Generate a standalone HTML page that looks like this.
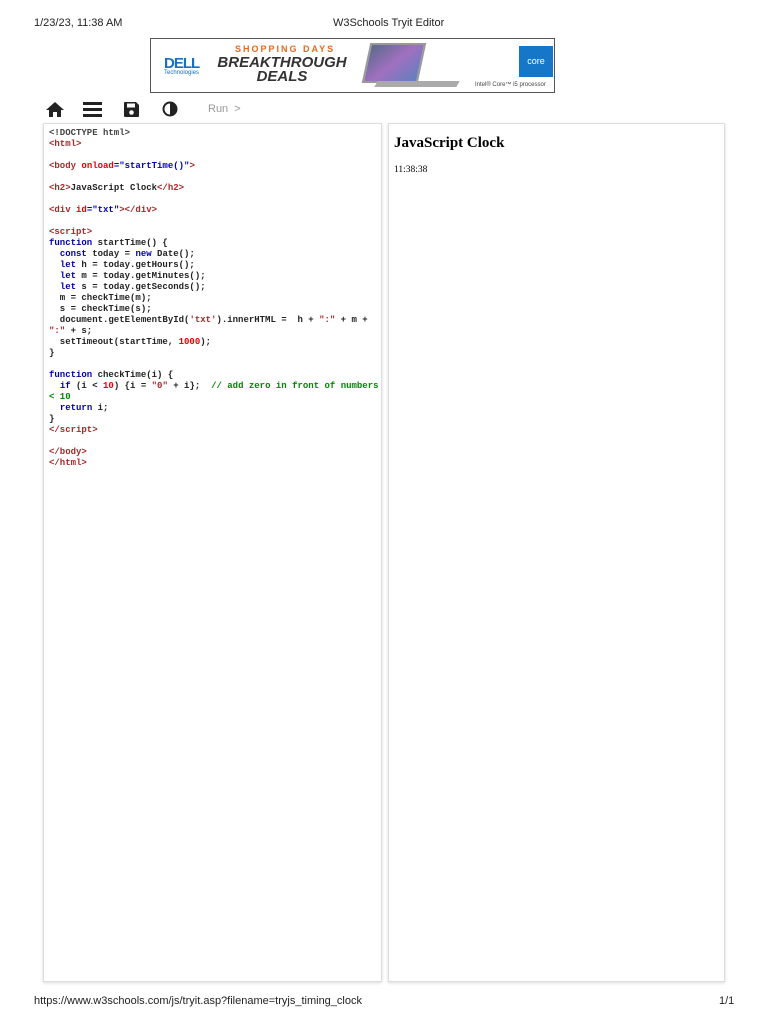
<!DOCTYPE html>
<html><head><style>
body{margin:0;width:768px;height:1024px;background:#fff;position:relative;font-family:"Liberation Sans",sans-serif;overflow:hidden}
.hd{position:absolute;top:17px;font-size:11px;color:#222}
.ad{position:absolute;left:150px;top:38px;width:405px;height:55px;border:1px solid #555;box-sizing:border-box;background:#fff}
.panel{position:absolute;top:123px;height:859px;border:1px solid #ddd;box-shadow:0 1px 3px rgba(0,0,0,.15);box-sizing:border-box}
pre{margin:0;position:absolute;left:5px;top:4px;font-family:"Liberation Mono",monospace;font-size:9px;line-height:11px;font-weight:bold;color:#222}
.t{color:#a52a2a}.a{color:#e00}.v{color:#00b}.k{color:#00a}.n{color:#e00}.c{color:#080}.q{color:#a52a2a}.g{color:#444}
</style></head><body>
<div class="hd" style="left:34px">1/23/23, 11:38 AM</div>
<div class="hd" style="left:333px">W3Schools Tryit Editor</div>
<div class="ad">
 <div style="position:absolute;left:13px;top:16px;color:#1a6fc0;font-weight:bold;font-size:15px;letter-spacing:-1px">DELL</div>
 <div style="position:absolute;left:13px;top:31px;color:#1a6fc0;font-size:6px">Technologies</div>
 <div style="position:absolute;left:84px;top:5px;color:#e86a1f;font-weight:bold;font-size:9px;letter-spacing:2px">SHOPPING DAYS</div>
 <div style="position:absolute;left:66px;top:17px;width:130px;text-align:center;color:#333;font-weight:bold;font-style:italic;font-size:15px;line-height:14px">BREAKTHROUGH<br>DEALS</div>
 <div style="position:absolute;left:215px;top:4px;width:52px;height:36px;background:linear-gradient(135deg,#5a6a8a,#a070c0,#6080c0);transform:skewX(-12deg);border:2px solid #999"></div>
 <div style="position:absolute;left:225px;top:42px;width:82px;height:6px;background:#aaa;transform:skewX(-30deg)"></div>
 <div style="position:absolute;left:368px;top:7px;width:34px;height:31px;background:#1677c8;color:#fff;font-size:9px;text-align:center;line-height:31px">core</div>
 <div style="position:absolute;left:324px;top:43px;font-size:6px;color:#444">Intel® Core™ i5 processor</div>
</div>
<svg style="position:absolute;left:46px;top:101px" width="18" height="16" viewBox="0 0 18 16"><path d="M9 1L0 9h3v7h4v-5h4v5h4V9h3z" fill="#222"/></svg>
<svg style="position:absolute;left:83px;top:102px" width="19" height="15"><rect y="0" width="19" height="3" fill="#222"/><rect y="6" width="19" height="3" fill="#222"/><rect y="12" width="19" height="3" fill="#222"/></svg>
<svg style="position:absolute;left:124px;top:102px" width="15" height="15" viewBox="0 0 15 15"><path d="M0 1a1 1 0 0 1 1-1h11l3 3v11a1 1 0 0 1-1 1H1a1 1 0 0 1-1-1z" fill="#222"/><rect x="3" y="1.5" width="8" height="4" fill="#fff"/><circle cx="7.5" cy="10.5" r="2.3" fill="#fff"/></svg>
<svg style="position:absolute;left:162px;top:101px" width="16" height="16" viewBox="0 0 16 16"><circle cx="8" cy="8" r="6.5" fill="none" stroke="#222" stroke-width="2"/><path d="M8 1.5a6.5 6.5 0 0 1 0 13z" fill="#222"/></svg>
<div style="position:absolute;left:208px;top:103px;font-size:11px;color:#999">Run &nbsp;&gt;</div>
<div class="panel" style="left:43px;width:339px"><pre><span class="g">&lt;!DOCTYPE html&gt;</span>
<span class="t">&lt;html&gt;</span>

<span class="t">&lt;body</span> <span class="a">onload</span><span class="v">="startTime()"</span><span class="t">&gt;</span>

<span class="t">&lt;h2&gt;</span>JavaScript Clock<span class="t">&lt;/h2&gt;</span>

<span class="t">&lt;div</span> <span class="a">id</span><span class="v">="txt"</span><span class="t">&gt;&lt;/div&gt;</span>

<span class="t">&lt;script&gt;</span>
<span class="k">function</span> startTime() {
  <span class="k">const</span> today = <span class="k">new</span> Date();
  <span class="k">let</span> h = today.getHours();
  <span class="k">let</span> m = today.getMinutes();
  <span class="k">let</span> s = today.getSeconds();
  m = checkTime(m);
  s = checkTime(s);
  document.getElementById(<span class="q">'txt'</span>).innerHTML =  h + <span class="q">":"</span> + m +
<span class="q">":"</span> + s;
  setTimeout(startTime, <span class="n">1000</span>);
}

<span class="k">function</span> checkTime(i) {
  <span class="k">if</span> (i &lt; <span class="n">10</span>) {i = <span class="q">"0"</span> + i};  <span class="c">// add zero in front of numbers</span>
<span class="c">&lt; 10</span>
  <span class="k">return</span> i;
}
<span class="t">&lt;/script&gt;</span>

<span class="t">&lt;/body&gt;</span>
<span class="t">&lt;/html&gt;</span></pre></div>
<div class="panel" style="left:388px;width:337px">
 <div style="position:absolute;left:5px;top:11px;font-family:'Liberation Serif',serif;font-weight:bold;font-size:15px">JavaScript Clock</div>
 <div style="position:absolute;left:5px;top:41px;font-family:'Liberation Serif',serif;font-size:9.5px">11:38:38</div>
</div>
<div class="hd" style="left:34px;top:995px">https://www.w3schools.com/js/tryit.asp?filename=tryjs_timing_clock</div>
<div class="hd" style="left:719px;top:995px">1/1</div>
</body></html>
